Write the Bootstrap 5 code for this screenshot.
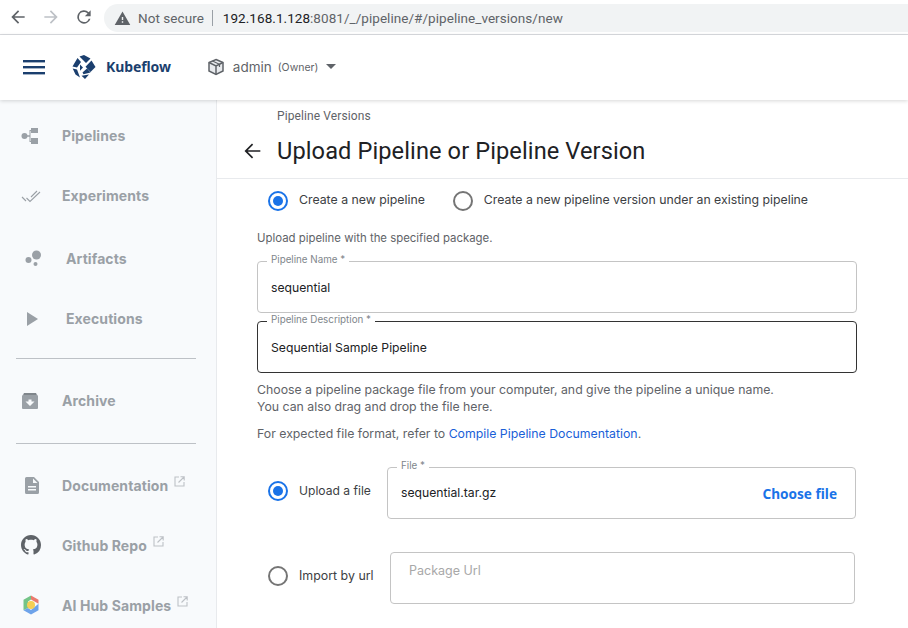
<!DOCTYPE html>
<html lang="en">
<head>
<meta charset="utf-8">
<title>Upload Pipeline</title>
<link rel="stylesheet" href="https://cdn.jsdelivr.net/npm/bootstrap@5.3.0/dist/css/bootstrap.min.css">
<style>
html,body{height:628px;overflow:hidden;background:#fff;font-family:"Inter",sans-serif;}
.chrome-bar{height:35px;border-bottom:1px solid #dadce0;padding-left:8px;}
.chrome-gap{margin-left:13px;}
.omni{margin-left:10px;flex:1;height:28px;margin-top:2px;background:#f1f3f4;border-radius:14px 0 0 14px;padding-left:10px;font:13.5px/28px "Roboto",sans-serif;letter-spacing:.05px;}
.omni-warn{color:#5f6368;margin-left:7px;}
.omni-sep{width:1px;height:16px;background:#9aa0a6;margin:0 10px 0 8px;}
.omni-host{color:#202124;}
.omni-path{color:#5f6368;}
.top-head{height:65px;padding:0 0 2px 23px;position:relative;z-index:3;box-shadow:0 1px 4px rgba(0,0,0,.16);background:#fff;}
.brand-logo{margin-left:27px;}
.brand-name{font:700 14px "Noto Sans",sans-serif;color:#1b3f6e;margin-left:10px;letter-spacing:-.1px;}
.ns-zone{margin-left:36px;color:#5f6368;}
.ns-name{font:13.5px "Inter",sans-serif;margin-left:8px;color:#5f6368;}
.ns-role{font:10.5px "Inter",sans-serif;margin-left:6px;color:#5f6368;margin-top:2px;}
.ns-caret{width:0;height:0;border-left:5px solid transparent;border-right:5px solid transparent;border-top:5px solid #5f6368;margin-left:8px;}
.shell{height:528px;}
.side{width:217px;flex:none;background:#f8fafc;border-right:1px solid #e8eaed;padding-top:5px;overflow:hidden;}
.side-item{height:60px;padding-left:21px;color:#9aa0a6;font:700 14px "Inter",sans-serif;letter-spacing:.1px;}
.side-ic{width:41px;flex:none;}
.side-item.wide .side-ic{width:45px;padding-left:4px;}
.side-item.wide.first-wide{margin-top:3px;}
.ext{margin:-8px 0 0 6px;}
.side-rule{height:1px;background:#bdc1c6;margin:10px 20px 11px 16px;}
.side-rule.low{margin:13px 20px 11px 16px;}
.main-col{min-width:0;}
.crumb{font:12px/17px "Roboto",sans-serif;color:#5f6368;padding:8px 0 0 60px;height:25px;letter-spacing:.1px;}
.title-row{height:54px;padding:0 0 1px 25px;border-bottom:1px solid #e8eaed;}
.page-title{font:400 23.6px "Roboto",sans-serif;color:#202124;margin:0 0 0 15px;padding-bottom:1px;letter-spacing:.1px;}
.form-body{padding-left:40px;width:640px;font-family:"Inter",sans-serif;color:#5f6368;}
.choice{font-size:12.3px;color:#3c4043;}
.dot{width:20px;height:20px;border-radius:50%;border:2px solid #757575;flex:none;margin-right:11px;position:relative;}
.dot.on{border-color:#1a73e8;}
.dot.on::after{content:"";position:absolute;inset:3px;border-radius:50%;background:#1a73e8;}
.dot.far{margin-left:28px;}
.choice-top{height:43px;padding-left:11px;}
.note{font-size:12.3px;line-height:17px;margin:0;color:#5f6368;}
.note.tiny{font-size:11.4px;margin-top:8px;margin-bottom:14px;}
.note.after-fields{margin-top:8px;}
.note.format-note{margin-top:10px;}
.field{height:52px;border:1px solid #c4c4c4;border-radius:4px;position:relative;padding:1px 0 0 13px;font-size:12.2px;color:#202124;}
.field.field-wide{padding-top:3px;}
.field.dark{border-color:#333;}
.field-tag{position:absolute;left:9px;top:-8px;background:#fff;padding:0 4px;font-size:9.8px;line-height:12px;color:#80868b;}
.field-wide{width:600px;}
.file-row{margin-top:25px;}
.url-row{margin-top:33px;}
.file-box{margin:0 1px 0 11px;}
.url-box{margin:0 2px 0 14px;}
.file-act{font:700 13.6px "Noto Sans",sans-serif;color:#1a73e8;margin-right:18px;}
.ph{color:#a8a8a8;font-size:12.5px;padding:8px 0 0 5px;}
.mode{width:119px;padding-left:11px;flex:none;font-size:12.4px;margin-bottom:4px;}
.mode-up{font-size:12.1px;}
.docs-link{color:#1a5fd8;text-decoration:none;}
</style>
</head>
<body>
<div class="chrome-bar d-flex align-items-center">
  <svg width="20" height="20" viewBox="0 0 24 24" fill="#5f6368"><path d="M20 11H7.800l5.600-5.600L12 4l-8 8 8 8 1.400-1.400L7.800 13H20z"/></svg>
  <svg class="chrome-gap" width="20" height="20" viewBox="0 0 24 24" fill="#bdc1c6"><path d="M4 11h12.200l-5.600-5.600L12 4l8 8-8 8-1.400-1.400 5.600-5.600H4z"/></svg>
  <svg class="chrome-gap" width="20" height="20" viewBox="0 0 24 24" fill="#5f6368"><path d="M17.650 6.350A8 8 0 1 0 19.730 14h-2.080A6 6 0 1 1 12 6c1.660 0 3.140.69 4.220 1.780L13 11h7V4z"/></svg>
  <div class="omni d-flex align-items-center">
    <svg width="17" height="17" viewBox="0 0 24 24" fill="#5f6368"><path d="M1 21h22L12 2zm12-3h-2v-2h2zm0-4h-2v-4h2z"/></svg>
    <span class="omni-warn">Not secure</span><span class="omni-sep"></span>
    <span class="omni-host">192.168.1.128</span><span class="omni-path">:8081/_/pipeline/#/pipeline_versions/new</span>
  </div>
</div>
<div class="top-head d-flex align-items-center">
  <svg width="22" height="16" viewBox="0 0 22 16" fill="#1b3f6e"><rect width="22" height="2.400" y="1"/><rect width="22" height="2.400" y="7"/><rect width="22" height="2.400" y="13"/></svg>
  <svg class="brand-logo" width="24" height="24" viewBox="0 0 24 24" fill="#1b3f6e"><path d="M7.500 1.500 12 0l6.500 3.500L14 8zM5.500 3 9 7 5 12.500 .5 11.500zM19.500 5.500 23.500 12 18.500 17 13.500 11.800zM.7 13.500 5 14.500 8 22.500 3.500 19.500zM8 9.500l3 3-3 3.200zM10.500 17.500l4.500-4 3.500 4-7 1.800zM9.500 20.800 17 19.500 13 24z"/></svg>
  <span class="brand-name">Kubeflow</span>
  <div class="ns-zone d-flex align-items-center">
    <svg width="18" height="18" viewBox="0 0 18 18" fill="none" stroke="#5f6368" stroke-width="1.500"><path d="M9 1.500 16 4.500V13L9 16.500 2 13V4.500z" fill="#e8eaed"/><path d="M2 4.500 9 8l7-3.500M9 8v8.500" /><path d="M5.500 3 12.500 6.300V9" stroke-width="1.200"/></svg>
    <span class="ns-name">admin</span><span class="ns-role">(Owner)</span><span class="ns-caret"></span>
  </div>
</div>
<div class="shell d-flex">
  <nav class="side">
    <div class="side-item d-flex align-items-center">
      <div class="side-ic"><svg width="18" height="18" viewBox="0 0 18 18" fill="#9aa0a6"><circle cx="3.500" cy="9" r="3"/><rect x="10" y="1" width="7" height="5"/><rect x="10" y="11" width="7" height="6"/><path d="M5 8.300h3.500V3h2v1H9.500v10h1v1h-2V9.700H5z"/></svg></div>Pipelines
    </div>
    <div class="side-item d-flex align-items-center">
      <div class="side-ic"><svg width="20" height="14" viewBox="0 0 20 14" fill="none" stroke="#9aa0a6" stroke-width="1.100"><path d="M1 7l4 4M5.500 8l3.500 3.500L19 2M10 7l6-6"/></svg></div>Experiments
    </div>
    <div class="side-item wide first-wide d-flex align-items-center">
      <div class="side-ic"><svg width="17" height="17" viewBox="0 0 17 17" fill="#9aa0a6"><circle cx="3.500" cy="10" r="3"/><circle cx="11.500" cy="5" r="4.500"/><circle cx="10.500" cy="14" r="2"/></svg></div>Artifacts
    </div>
    <div class="side-item wide d-flex align-items-center">
      <div class="side-ic"><svg width="14" height="16" viewBox="0 0 14 16" fill="#9aa0a6"><path d="M2 1l11 7-11 7z"/></svg></div>Executions
    </div>
    <div class="side-rule"></div>
    <div class="side-item d-flex align-items-center">
      <div class="side-ic"><svg width="18" height="18" viewBox="0 0 18 18" fill="#9aa0a6"><path fill-rule="evenodd" d="M3 1h12l2 3v12a1 1 0 0 1-1 1H2a1 1 0 0 1-1-1V4zm6 13 4.500-4.500H10.500V7.500h-3v2H4.500z"/><rect x="3" y="1" width="12" height="2" fill="#80868b"/></svg></div>Archive
    </div>
    <div class="side-rule low"></div>
    <div class="side-item d-flex align-items-center">
      <div class="side-ic"><svg class="ms-1" width="14" height="17" viewBox="0 0 14 17" fill="#9aa0a6"><path fill-rule="evenodd" d="M1.500 0H9l5 5v10.500a1.500 1.500 0 0 1-1.500 1.500h-11A1.500 1.500 0 0 1 0 15.500v-14A1.500 1.500 0 0 1 1.500 0zM8 1.500V6h4.500zM3 9v1.500h8V9zm0 3v1.500h8V12z"/></svg></div>Documentation<svg class="ext" width="11" height="11" viewBox="0 0 11 11" fill="none" stroke="#bdc1c6" stroke-width="1.100"><path d="M5 1H1v9h9V6M6.500 .8h3.700v3.700M10 1 4.500 6.500"/></svg>
    </div>
    <div class="side-item d-flex align-items-center">
      <div class="side-ic"><svg width="20" height="20" viewBox="0 0 16 16" fill="#5f6368"><path d="M8 0C3.580 0 0 3.580 0 8c0 3.540 2.290 6.530 5.470 7.590.4.070.55-.17.55-.38 0-.19-.01-.82-.01-1.490-2.010.37-2.530-.49-2.690-.94-.09-.23-.48-.94-.82-1.130-.28-.15-.68-.52-.01-.53.630-.01 1.080.58 1.230.82.720 1.210 1.870.87 2.330.66.070-.52.280-.87.510-1.070-1.780-.2-3.640-.89-3.640-3.950 0-.87.310-1.590.82-2.150-.08-.2-.36-1.020.08-2.120 0 0 .67-.21 2.200.82.640-.18 1.320-.27 2-.27s1.360.09 2 .27c1.530-1.040 2.200-.82 2.200-.82.440 1.100.16 1.920.08 2.120.51.560.82 1.270.82 2.150 0 3.070-1.870 3.750-3.650 3.950.290.25.54.73.54 1.480 0 1.070-.01 1.930-.01 2.200 0 .21.150.46.55.38A8.010 8.010 0 0 0 16 8c0-4.420-3.580-8-8-8z"/></svg></div>Github Repo<svg class="ext" width="11" height="11" viewBox="0 0 11 11" fill="none" stroke="#bdc1c6" stroke-width="1.100"><path d="M5 1H1v9h9V6M6.500 .8h3.700v3.700M10 1 4.500 6.500"/></svg>
    </div>
    <div class="side-item d-flex align-items-center">
      <div class="side-ic"><svg width="20" height="20" viewBox="0 0 20 20"><path d="M10 0.500l7.500 4.200v4L10 4.500z" fill="#ea7a6e"/><path d="M2.500 4.700 10 .5v4L7 6.500v6.500L2.500 15.300z" fill="#74c487"/><path d="M17.500 8.700v6.600L10 19.500v-4.500z" fill="#6ea3ea"/><path d="M2.500 15.300l4.500-2.300 3 2v4.500z" fill="#6ea3ea"/><circle cx="10" cy="10" r="4" fill="#f5cf55"/></svg></div>AI Hub Samples<svg class="ext" width="11" height="11" viewBox="0 0 11 11" fill="none" stroke="#bdc1c6" stroke-width="1.100"><path d="M5 1H1v9h9V6M6.500 .8h3.700v3.700M10 1 4.500 6.500"/></svg>
    </div>
  </nav>
  <main class="main-col flex-grow-1">
    <div class="crumb">Pipeline Versions</div>
    <div class="title-row d-flex align-items-center">
      <svg width="20" height="20" viewBox="0 0 24 24" fill="#202124"><path d="M22 11H6.800l6.600-6.600L12 3l-9 9 9 9 1.400-1.400L6.800 13H22z"/></svg>
      <h1 class="page-title">Upload Pipeline or Pipeline Version</h1>
    </div>
    <div class="form-body">
      <div class="choice choice-top d-flex align-items-center">
        <span class="dot on"></span><span>Create a new pipeline</span>
        <span class="dot far"></span><span>Create a new pipeline version under an existing pipeline</span>
      </div>
      <p class="note tiny">Upload pipeline with the specified package.</p>
      <div class="field field-wide d-flex align-items-center"><span class="field-tag">Pipeline Name *</span>sequential</div>
      <div class="field dark field-wide d-flex align-items-center mt-2"><span class="field-tag">Pipeline Description *</span>Sequential Sample Pipeline</div>
      <p class="note after-fields">Choose a pipeline package file from your computer, and give the pipeline a unique name.<br>You can also drag and drop the file here.</p>
      <p class="note format-note">For expected file format, refer to <a class="docs-link" href="#">Compile Pipeline Documentation</a>.</p>
      <div class="file-row d-flex align-items-center choice">
        <div class="mode mode-up d-flex align-items-center"><span class="dot on"></span><span class="text-nowrap">Upload a file</span></div>
        <div class="field file-box flex-grow-1 d-flex align-items-center justify-content-between"><span class="field-tag">File *</span><span>sequential.tar.gz</span><span class="file-act">Choose file</span></div>
      </div>
      <div class="url-row d-flex align-items-center choice">
        <div class="mode d-flex align-items-center"><span class="dot"></span><span class="text-nowrap">Import by url</span></div>
        <div class="field url-box flex-grow-1 align-items-start"><div class="ph">Package Url</div></div>
      </div>
    </div>
  </main>
</div>
<script src="https://cdn.jsdelivr.net/npm/bootstrap@5.3.0/dist/js/bootstrap.bundle.min.js"></script>
</body>
</html>
